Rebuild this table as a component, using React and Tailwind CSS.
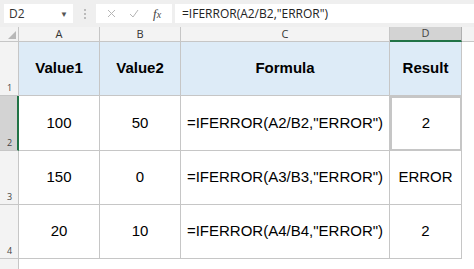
import React from 'react';

const rows = [
    { n: 1, cells: ['Value1', 'Value2', 'Formula', 'Result'], head: true },
    { n: 2, cells: ['100', '50', '=IFERROR(A2/B2,"ERROR")', '2'], sel: true },
    { n: 3, cells: ['150', '0', '=IFERROR(A3/B3,"ERROR")', 'ERROR'] },
    { n: 4, cells: ['20', '10', '=IFERROR(A4/B4,"ERROR")', '2'] },
];

const heights = ['h-[54px]', 'h-[55px]', 'h-[54px]', 'h-[54px]'];

const App = () => {
    return (
        <div className="w-[474px] h-[269px] overflow-hidden bg-white font-['Liberation_Sans',Arial,sans-serif]">
            {/* formula bar */}
            <div className="h-[27px] bg-[#efefef] flex items-center pl-[4px] font-['Open_Sans',sans-serif] text-[12px] text-[#333]">
                <div className="w-[69px] h-[19px] bg-white flex items-center justify-between px-[5px]">
                    <span>D2</span>
                    <span className="text-[8px] text-[#555]">▼</span>
                </div>
                <div className="w-[23px] flex flex-col items-center gap-[2px]">
                    <span className="w-[2px] h-[2px] bg-[#bbb]" />
                    <span className="w-[2px] h-[2px] bg-[#bbb]" />
                    <span className="w-[2px] h-[2px] bg-[#bbb]" />
                </div>
                <div className="w-[76px] h-[19px] bg-white flex items-center justify-around px-[4px]">
                    <svg width="9" height="9" viewBox="0 0 9 9"><path d="M1 1L8 8M8 1L1 8" stroke="#b5b5b5" strokeWidth="1" /></svg>
                    <svg width="10" height="9" viewBox="0 0 10 9"><path d="M1 5L4 8L9 1" stroke="#b5b5b5" strokeWidth="1" fill="none" /></svg>
                    <span className="font-['Liberation_Serif',serif] italic text-[13px] text-[#444]">f<span className="text-[10px]">x</span></span>
                </div>
                <div className="ml-[3px] flex-1 h-[19px] bg-white flex items-center pl-[7px] text-[12px] text-[#222]">
                    =IFERROR(A2/B2,"ERROR")
                </div>
            </div>
            {/* grid */}
            <div className="grid grid-cols-[19px_81px_81px_209px_72px_1fr]">
                <div className="h-[15px] bg-[#f3f3f3] border-r border-b border-[#c6c6c6] relative">
                    <svg className="absolute right-[2px] bottom-[2px]" width="8" height="8" viewBox="0 0 8 8"><path d="M8 0L8 8L0 8Z" fill="#b8b8b8" /></svg>
                </div>
                {['A', 'B', 'C'].map(c => (
                    <div key={c} className="h-[15px] bg-[#f3f3f3] border-r border-b border-[#c6c6c6] flex items-center justify-center text-[11px] text-[#333] font-['Open_Sans',sans-serif]">{c}</div>
                ))}
                <div className="h-[15px] bg-[#d3d3d3] border-r border-[#b0b0b0] border-b-2 border-b-[#217346] flex items-center justify-center text-[11px] text-[#444] font-['Open_Sans',sans-serif]">D</div>
                <div className="h-[15px] bg-[#f3f3f3] border-b border-[#c6c6c6]" />
                {rows.map((r, i) => (
                    <React.Fragment key={r.n}>
                        <div className={`${heights[i]} flex items-end pl-[7px] pb-[1px] text-[9px] text-[#444] font-['Open_Sans',sans-serif] border-b border-[#c6c6c6] ${r.sel ? 'bg-[#d3d3d3] border-r-2 border-r-[#217346]' : 'bg-[#f3f3f3] border-r'}`}>{r.n}</div>
                        {r.cells.map((c, j) => (
                            <div
                                key={j}
                                className={`${heights[i]} flex items-center justify-center text-[15px] text-black border-[#c6c6c6] ${r.head ? 'font-bold bg-[#ddebf7]' : ''} ${r.sel && j === 3 ? 'border-2 border-[#217346]' : 'border-r border-b'}`}
                            >
                                {c}
                            </div>
                        ))}
                        <div className={`${heights[i]}`} />
                    </React.Fragment>
                ))}
                <div className="h-[10px] bg-[#f3f3f3] border-r border-[#c6c6c6]" />
            </div>
        </div>
    );
};

export default App;
